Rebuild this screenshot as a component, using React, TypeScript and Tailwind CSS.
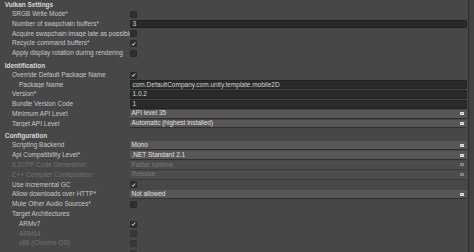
import React from "react";

type RowProps = {
  label: string;
  indent?: boolean;
  disabled?: boolean;
  children?: React.ReactNode;
};

function Row({ label, indent, disabled, children }: RowProps) {
  return (
    <div className="flex h-[9.8px] shrink-0 items-center">
      <div
        className={
          "w-[130px] shrink-0 overflow-hidden whitespace-nowrap leading-none " +
          (indent ? "pl-[19px] " : "pl-[12px] ") +
          (disabled ? "text-[#727272]" : "text-[#c8c8c8]")
        }
      >
        {label}
      </div>
      <div className="flex h-full flex-1 items-center pr-[1px]">{children}</div>
    </div>
  );
}

function Header({ title, first }: { title: string; first?: boolean }) {
  return (
    <div
      className={
        "flex h-[8.6px] shrink-0 items-center pl-[4.7px] font-bold leading-none text-[#d8d8d8] " +
        (first ? "" : "mt-[3.3px]")
      }
    >
      {title}
    </div>
  );
}

function Check({ on, disabled }: { on?: boolean; disabled?: boolean }) {
  return (
    <div
      className={
        "flex h-[7px] w-[7px] items-center justify-center rounded-[1px] border " +
        (disabled ? "border-[#353535] bg-[#383838]" : "border-[#2a2a2a] bg-[#2f2f2f]")
      }
    >
      {on && (
        <svg width="6" height="6" viewBox="0 0 6 6">
          <path d="M1 3.2 L2.4 4.6 L5 1.2" stroke="#f0f0f0" strokeWidth="1.1" fill="none" />
        </svg>
      )}
    </div>
  );
}

function Field({ value }: { value: string }) {
  return (
    <div className="flex h-[8.8px] w-full items-center rounded-[1px] border border-[#222222] bg-[#2a2a2a] pl-[1.5px] leading-none text-[#d4d4d4]">
      {value}
    </div>
  );
}

function Drop({ value, disabled }: { value: string; disabled?: boolean }) {
  return (
    <div
      className={
        "flex h-[8.8px] w-full items-center justify-between rounded-[1px] border-b pl-[1.5px] pr-[3px] leading-none " +
        (disabled
          ? "border-[#3a3a3a] bg-[#4c4c4c] text-[#7a7a7a]"
          : "border-[#303030] bg-[#575757] text-[#e0e0e0]")
      }
    >
      <span>{value}</span>
      <svg width="4" height="3" viewBox="0 0 4 3">
        <rect x="0" y="0" width="4" height="3" rx="0.6" fill={disabled ? "#8a8a8a" : "#e8e8e8"} />
        <path d="M0.6 0.9 L3.4 0.9 L2 2.3 Z" fill={disabled ? "#6a6a6a" : "#8a8a8a"} />
      </svg>
    </div>
  );
}

export default function App() {
  return (
    <div
      className="flex h-[252px] w-[474px] overflow-hidden bg-[#474747] text-[6.5px]"
      style={{ fontFamily: '"Liberation Sans", Arial, sans-serif' }}
    >
      <div className="flex w-[468px] shrink-0 flex-col pt-[0.7px]">
        <Header title="Vulkan Settings" first />
        <Row label="SRGB Write Mode*">
          <Check />
        </Row>
        <Row label="Number of swapchain buffers*">
          <Field value="3" />
        </Row>
        <Row label="Acquire swapchain image late as possible*">
          <Check />
        </Row>
        <Row label="Recycle command buffers*">
          <Check on />
        </Row>
        <Row label="Apply display rotation during rendering">
          <Check />
        </Row>

        <Header title="Identification" />
        <Row label="Override Default Package Name">
          <Check on />
        </Row>
        <Row label="Package Name" indent>
          <Field value="com.DefaultCompany.com.unity.template.mobile2D" />
        </Row>
        <Row label="Version*">
          <Field value="1.0.2" />
        </Row>
        <Row label="Bundle Version Code">
          <Field value="1" />
        </Row>
        <Row label="Minimum API Level">
          <Drop value="API level 35" />
        </Row>
        <Row label="Target API Level">
          <Drop value="Automatic (highest installed)" />
        </Row>

        <Header title="Configuration" />
        <Row label="Scripting Backend">
          <Drop value="Mono" />
        </Row>
        <Row label="Api Compatibility Level*">
          <Drop value=".NET Standard 2.1" />
        </Row>
        <Row label="IL2CPP Code Generation" disabled>
          <Drop value="Faster runtime" disabled />
        </Row>
        <Row label="C++ Compiler Configuration" disabled>
          <Drop value="Release" disabled />
        </Row>
        <Row label="Use incremental GC">
          <Check on />
        </Row>
        <Row label="Allow downloads over HTTP*">
          <Drop value="Not allowed" />
        </Row>
        <Row label="Mute Other Audio Sources*">
          <Check />
        </Row>
        <Row label="Target Architectures" />
        <Row label="ARMv7" indent>
          <Check on />
        </Row>
        <Row label="ARM64" indent disabled>
          <Check disabled />
        </Row>
        <Row label="x86 (Chrome OS)" indent disabled>
          <Check disabled />
        </Row>
        <Row label="" indent disabled>
          <Check disabled />
        </Row>
      </div>
      <div className="w-[1px] shrink-0 bg-[#2e2e2e]" />
      <div className="flex-1 bg-[#424242]" />
    </div>
  );
}
